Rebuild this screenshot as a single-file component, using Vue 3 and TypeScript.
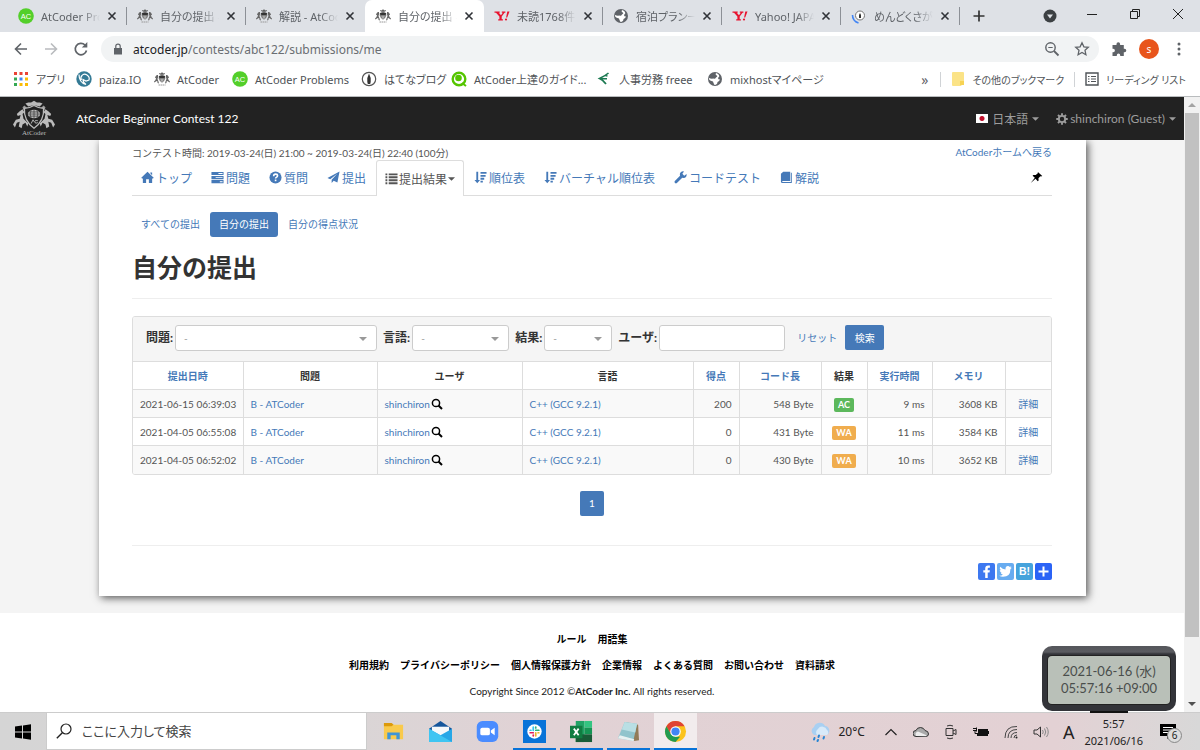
<script setup lang="ts">
interface Tab { icon: string; title: string; active?: boolean }
interface Mark { icon: string; title: string }
interface NavItem { icon: string; title: string; active?: boolean }
interface Row { time: string; score: number; size: string; result: string; exec: string; memory: string }

const tabs: Tab[] = [
  { icon: 'ac', title: 'AtCoder Problems' },
  { icon: 'crest', title: '自分の提出 - AtCoder' },
  { icon: 'crest', title: '解説 - AtCoder' },
  { icon: 'crest', title: '自分の提出 - AtCoder', active: true },
  { icon: 'yahoo', title: '未読1768件' },
  { icon: 'globe', title: '宿泊プラン一覧' },
  { icon: 'yahoo', title: 'Yahoo! JAPAN' },
  { icon: 'loading', title: 'めんどくさがり' },
]

const bookmarks: Mark[] = [
  { icon: 'apps', title: 'アプリ' },
  { icon: 'paiza', title: 'paiza.IO' },
  { icon: 'crest', title: 'AtCoder' },
  { icon: 'ac', title: 'AtCoder Problems' },
  { icon: 'pen', title: 'はてなブログ' },
  { icon: 'qiita', title: 'AtCoder上達のガイド...' },
  { icon: 'freee', title: '人事労務 freee' },
  { icon: 'globe', title: 'mixhostマイページ' },
]

const nav: NavItem[] = [
  { icon: 'home', title: 'トップ' },
  { icon: 'tasks', title: '問題' },
  { icon: 'question', title: '質問' },
  { icon: 'send', title: '提出' },
  { icon: 'list', title: '提出結果', active: true },
  { icon: 'sort', title: '順位表' },
  { icon: 'sort', title: 'バーチャル順位表' },
  { icon: 'wrench', title: 'コードテスト' },
  { icon: 'book', title: '解説' },
]

const columns = [
  { title: '提出日時', link: true },
  { title: '問題', link: false },
  { title: 'ユーザ', link: false },
  { title: '言語', link: false },
  { title: '得点', link: true },
  { title: 'コード長', link: true },
  { title: '結果', link: false },
  { title: '実行時間', link: true },
  { title: 'メモリ', link: true },
  { title: '', link: false },
]

const rows: Row[] = [
  { time: '2021-06-15 06:39:03', score: 200, size: '548 Byte', result: 'AC', exec: '9 ms', memory: '3608 KB' },
  { time: '2021-04-05 06:55:08', score: 0, size: '431 Byte', result: 'WA', exec: '11 ms', memory: '3584 KB' },
  { time: '2021-04-05 06:52:02', score: 0, size: '430 Byte', result: 'WA', exec: '10 ms', memory: '3652 KB' },
]

const footerTop = ['ルール', '用語集']
const footerLinks = ['利用規約', 'プライバシーポリシー', '個人情報保護方針', '企業情報', 'よくある質問', 'お問い合わせ', '資料請求']
const shares = ['facebook', 'twitter', 'hatena', 'plus']

const apps = [
  { icon: 'folder', label: 'エクスプローラー', state: '' },
  { icon: 'mail', label: 'メール', state: '' },
  { icon: 'zoom', label: 'Zoom', state: '' },
  { icon: 'slack', label: 'Slack', state: 'running' },
  { icon: 'excel', label: 'Excel', state: 'running' },
  { icon: 'notepad', label: 'メモ帳', state: 'running' },
  { icon: 'chrome', label: 'Chrome', state: 'running focused' },
]
const tray = ['chevron', 'cloud', 'meet', 'battery', 'wifi', 'volume']
</script>

<template>
  <div class="desktop">
    <svg class="sprite" aria-hidden="true">
      <symbol id="i-ac" viewBox="0 0 16 16"><circle cx="8" cy="8" r="7.8" fill="#53cf2a" /><text x="8" y="10.8" font-size="7.5" font-family="Liberation Sans, sans-serif" text-anchor="middle" fill="#fff">AC</text></symbol>
      <symbol id="i-crest" viewBox="0 0 32 28">
        <path d="M11 4.500l-1-2.500 4 1 2-3 2 3 4-1-1 2.500q-5 2-10 0z" fill="#555" />
        <path d="M9.500 8q6.500-3 13 0v5q-1 5-6.500 8.500-5.500-3.500-6.500-8.500z" fill="#777" />
        <path d="M10 8.500q6-3 12 0v2.500q-6 3-12 0z" fill="#333" />
        <path d="M12.500 14.500h7M13.500 17.500h5M16 13v7" stroke="#fff" stroke-width="1" opacity=".7" />
        <path d="M8 6q-4-1-5 3l-1 3 2 0-1 4-3 3 1 2 4-3 2 1 0 3 3 1-1-4-2-5 1-3zM24 6q4-1 5 3l1 3-2 0 1 4 3 3-1 2-4-3-2 1 0 3-3 1 1-4 2-5-1-3z" fill="#666" />
        <path d="M9 26h14" stroke="#999" stroke-width="2" stroke-dasharray="3 1" />
      </symbol>
      <symbol id="i-logo" viewBox="0 0 44 30">
        <g fill="currentColor">
          <path d="M16 6l-3-3 3-1 3 0 3-2 3 2 3 0 3 1-3 3q-6-2-12 0z" />
          <path d="M12 5l3 3-4 2-1-3zM32 5l-3 3 4 2 1-3z" opacity=".8" />
          <path d="M10 9L7 11 4 14 5 16 8 15 7 19 3 20 0 25 2 28 4 23 7 22 6 27 9 29 10 25 13 23 15 27 16 24 11 19 10 14 12 12zM34 9l3 2 3 3-1 2-3-1 1 4 4 1 3 5-2 3-2-5-3-1 1 5-3 2-1-4-3-2-2 4-1-3 5-5 1-5-2-2z" />
        </g>
        <path d="M12 8q5 0 10-3 5 3 10 3 1 13-10 21-11-8-10-21z" fill="#222" stroke="currentColor" stroke-width="1.300" />
        <ellipse cx="22" cy="14" rx="6.500" ry="4.500" fill="currentColor" />
        <path d="M15.500 14h13M16.500 11.800h11M16.500 16.200h11M22 9.500v9M19 10q-2 4 0 8M25 10q2 4 0 8" stroke="#222" stroke-width=".6" fill="none" />
        <path d="M19 24l2-4 1 2M26 21q-4-1-3 2 1 1 3 0" stroke="currentColor" fill="none" />
      </symbol>
      <symbol id="i-yahoo" viewBox="0 0 16 16"><path d="M.5 3.500h5.200v1.300h-.9l2.200 2.500 1.800-2.500h-1V3.500h3.600v1.300h-.9L7.700 8.600v2.600h1.200v1.300H4.200v-1.300h1.200V8.600L2 4.800H.5zM13.300 3.500h2.200l-2.300 6h-1.100z" fill="#e8132f" /><circle cx="12" cy="11.500" r="1.100" fill="#e8132f" /></symbol>
      <symbol id="i-globe" viewBox="0 0 16 16"><circle cx="8" cy="8" r="7" fill="#5f6368" /><path d="M9 2q-1 2 1 2.500 1 1-1 2-1 2-2.500 1Q4 8 2 7q-.5 2 2.500 3 2 0 2 2l1 2q3-.5 3-3 2-1 2.500-2.500-2 0-2-1.500 2-1.500 1-3-1-1.500-3-2z" fill="#fff" /></symbol>
      <symbol id="i-loading" viewBox="0 0 16 16"><circle cx="9" cy="7.500" r="4.500" fill="#fff" stroke="#777" /><path d="M8 10V7l1-2 1 2v3z" fill="#333" /><path d="M1.500 7q0 6 6 8" fill="none" stroke="#4285f4" stroke-width="1.600" /></symbol>
      <symbol id="i-apps" viewBox="0 0 16 16"><path d="M1 1h3v3H1zM6.500 1h3v3h-3zM12 1h3v3h-3z" fill="#ea4335" /><path d="M1 6.500h3v3H1z" fill="#34a853" /><path d="M6.500 6.500h3v3h-3z" fill="#4285f4" /><path d="M12 6.500h3v3h-3zM6.500 12h3v3h-3zM12 12h3v3h-3z" fill="#fbbc05" /><path d="M1 12h3v3H1z" fill="#34a853" /></symbol>
      <symbol id="i-paiza" viewBox="0 0 16 16"><circle cx="8" cy="8" r="7.700" fill="#347a95" /><path d="M3 3.500q0 8 7 10-3-2-3-5l3 1.500 3-1q1-3-2-5-3-2-5 .5-2 2-.5 4.500" fill="none" stroke="#fff" stroke-width="1.200" /></symbol>
      <symbol id="i-pen" viewBox="0 0 16 16"><circle cx="8" cy="8" r="6.700" fill="#fff" stroke="#555" stroke-width="1.200" /><path d="M8 2.500L6.300 7v4l.5 2h2.400l.5-2V7z" fill="#333" /></symbol>
      <symbol id="i-qiita" viewBox="0 0 16 16"><circle cx="8" cy="8" r="6.300" fill="#fff" stroke="#55c500" stroke-width="2.400" /><circle cx="7.500" cy="7" r="3.300" fill="#55c500" /><path d="M11 12l4 3" stroke="#55c500" stroke-width="2" /></symbol>
      <symbol id="i-freee" viewBox="0 0 16 16"><path d="M12.500 2Q9 5 3.500 7.500q4.500 2 6.500 5.500M4 7.800h7M9.500 4.500l2 .5" fill="none" stroke="#1d7a52" stroke-width="1.600" /></symbol>

      <symbol id="i-back" viewBox="0 0 16 16"><path d="M14 8H3M8 2.500L2.500 8 8 13.500" fill="none" stroke="currentColor" stroke-width="1.600" /></symbol>
      <symbol id="i-forward" viewBox="0 0 16 16"><path d="M2 8h11M8 2.500L13.500 8 8 13.500" fill="none" stroke="currentColor" stroke-width="1.600" /></symbol>
      <symbol id="i-reload" viewBox="0 0 16 16"><path d="M13.500 9.500A5.700 5.700 0 1 1 12 4" fill="none" stroke="currentColor" stroke-width="1.700" /><path d="M14.300 1v5.500H8.800z" fill="currentColor" /></symbol>
      <symbol id="i-lock" viewBox="0 0 12 12"><path d="M2 5h8v6.500H2z" fill="currentColor" /><path d="M3.800 5.500V3.200q0-2 2.200-2t2.200 2v2.300" fill="none" stroke="currentColor" stroke-width="1.200" /></symbol>
      <symbol id="i-magnify" viewBox="0 0 16 16"><circle cx="6.500" cy="6.500" r="4.700" fill="none" stroke="currentColor" stroke-width="1.400" /><path d="M10 10l4.500 4.500" stroke="currentColor" stroke-width="1.800" /><path d="M4.300 6.500h4.400" stroke="currentColor" /></symbol>
      <symbol id="i-star" viewBox="0 0 16 16"><path d="M8 1.800l1.900 4 4.400.5-3.300 3 .9 4.400L8 11.500l-3.900 2.200.9-4.400-3.300-3 4.400-.5z" fill="none" stroke="currentColor" stroke-width="1.300" /></symbol>
      <symbol id="i-puzzle" viewBox="0 0 16 16"><path d="M1.500 4h4V3a1.800 1.800 0 0 1 3.600 0v1h3.700v3.700h.7a1.800 1.800 0 0 1 0 3.600h-.7V15H9.200v-.8a1.700 1.700 0 0 0-3.400 0v.8H1.500v-3.800h.7a1.700 1.700 0 0 0 0-3.400h-.7z" fill="currentColor" /></symbol>
      <symbol id="i-dots" viewBox="0 0 16 16"><circle cx="8" cy="3" r="1.500" fill="currentColor" /><circle cx="8" cy="8" r="1.500" fill="currentColor" /><circle cx="8" cy="13" r="1.500" fill="currentColor" /></symbol>
      <symbol id="i-x" viewBox="0 0 10 10"><path d="M1.500 1.500l7 7M8.500 1.500l-7 7" stroke="currentColor" stroke-width="1.600" /></symbol>
      <symbol id="i-add" viewBox="0 0 12 12"><path d="M6 .5v11M.5 6h11" stroke="currentColor" stroke-width="1.700" /></symbol>
      <symbol id="i-down" viewBox="0 0 14 14"><circle cx="7" cy="7" r="6.500" fill="currentColor" /><path d="M4 5.500h6L7 9.500z" fill="#dee1e6" /></symbol>
      <symbol id="i-min" viewBox="0 0 12 12"><path d="M1 6.500h10" stroke="currentColor" /></symbol>
      <symbol id="i-restore" viewBox="0 0 12 12"><path d="M1.500 3.500h7v7h-7zM3.500 3.500v-2h7v7h-2" fill="none" stroke="currentColor" /></symbol>
      <symbol id="i-close" viewBox="0 0 12 12"><path d="M1 1l10 10M11 1L1 11" stroke="currentColor" /></symbol>
      <symbol id="i-note" viewBox="0 0 14 14"><path d="M2 0h10q1 0 1 1v9l-3 4H2q-1 0-1-1V1q0-1 1-1z" fill="#fbe387" /><path d="M9 9h4v4H9z" fill="#f7d354" /></symbol>
      <symbol id="i-reading" viewBox="0 0 14 14"><path d="M1 1h12v12H1z" fill="none" stroke="currentColor" stroke-width="1.400" /><path d="M3 4.500h1.500M6 4.500h5M3 7h1.500M6 7h5M3 9.500h1.500M6 9.500h5" stroke="currentColor" stroke-width="1.200" /></symbol>

      <symbol id="i-home" viewBox="0 0 14 14"><path d="M7 .8l6.700 6.400-.8.800H12v5H8.500V9h-3v4H2V8H1.100l-.8-.8zM10 1.500h2v3l-2-2z" fill="currentColor" /></symbol>
      <symbol id="i-tasks" viewBox="0 0 14 14"><path d="M.5 1h13v3.400H.5zM.5 5.400h13v3.400H.5zM.5 9.800h13v3.400H.5z" fill="currentColor" /><path d="M8 2.200h4.500v1H8zM5 6.600h7.500v1H5zM9.500 11h3v1h-3z" fill="#fff" /></symbol>
      <symbol id="i-question" viewBox="0 0 14 14"><circle cx="7" cy="7" r="6.500" fill="currentColor" /><path d="M5 5.600q0-2.200 2.200-2.200 2 0 2 1.800 0 1-1.300 1.700-.8.400-.8 1.300" fill="none" stroke="#fff" stroke-width="1.700" /><path d="M6.200 9.200H8V11H6.200z" fill="#fff" /></symbol>
      <symbol id="i-send" viewBox="0 0 14 14"><path d="M13.500.5l-2.300 12-4-2L5 13V9.500l6-6.500-7.500 6L.5 7.500z" fill="currentColor" /></symbol>
      <symbol id="i-list" viewBox="0 0 14 14"><path d="M.5 1.500h2v2h-2zM4 1.500h9.500v2H4zM.5 4.700h2v2h-2zM4 4.700h9.500v2H4zM.5 7.900h2v2h-2zM4 7.900h9.500v2H4zM.5 11.100h2v2h-2zM4 11.100h9.500v2H4z" fill="currentColor" /></symbol>
      <symbol id="i-sort" viewBox="0 0 14 14"><path d="M2.500.8h2v9H6.500l-3 3.500-3-3.500h2zM7 1h6.500v2H7zM7 4.200h5.500v2H7zM7 7.400h4v2H7zM7 10.600h2.500v1.800H7z" fill="currentColor" /></symbol>
      <symbol id="i-wrench" viewBox="0 0 14 14"><path d="M13.500 3.200L11 5 9 3 10.800.6Q8-.2 6.800 2 6 3.500 6.500 5L.9 10.900q-.8 1.200.2 2.100 1 .8 2 0L8.900 7.400q3 .6 4.300-1.600.6-1.200.3-2.600z" fill="currentColor" /></symbol>
      <symbol id="i-book" viewBox="0 0 14 14"><path d="M3.500.8H11v10H2.500v1H11.700V2h1v11H2.500Q1 13 1 11.500V3z" fill="currentColor" /></symbol>
      <symbol id="i-pin" viewBox="0 0 14 14"><path d="M8.500 1l4.700 4.500-1.300.5-.8-.3-2 2.200.2 2.300-1 .8L6 8.300.8 13l4.400-5.700L2.800 5l.8-.8 2.600.2L8.400 2.500z" fill="currentColor" /></symbol>
      <symbol id="i-cog" viewBox="0 0 14 14"><circle cx="7" cy="7" r="3.700" fill="none" stroke="currentColor" stroke-width="2.200" /><path d="M7 .3v2.500M7 11.200v2.500M.3 7h2.500M11.200 7h2.500M2.300 2.300l1.700 1.700M10 10l1.700 1.700M2.300 11.700L4 10M10 4l1.700-1.700" stroke="currentColor" stroke-width="2.200" /></symbol>
      <symbol id="i-search" viewBox="0 0 12 12"><circle cx="5" cy="5" r="3.600" fill="none" stroke="currentColor" stroke-width="1.500" /><path d="M7.500 7.500l3.500 3.500" stroke="currentColor" stroke-width="2" /></symbol>
      <symbol id="i-caret" viewBox="0 0 8 4"><path d="M0 0h8L4 4z" fill="currentColor" /></symbol>

      <symbol id="i-facebook" viewBox="0 0 17 17"><rect width="17" height="17" rx="2" fill="#3d78f0" /><path d="M7.200 15V9.500H5.300V7.200h1.900V5.500q0-3 3-3h1.700v2.300h-1.200q-1 0-1 1v1.400h2.200l-.4 2.300H9.700V15z" fill="#fff" /></symbol>
      <symbol id="i-twitter" viewBox="0 0 17 17"><rect width="17" height="17" rx="2" fill="#68acf0" /><path d="M14.800 4.700l-1.400 1.500q0 7.600-7.400 7.600-2.200 0-3.800-1.100 2.200.1 3.700-1.200-1.700-.2-2.300-1.800h1.100Q2.800 9 2.700 7l1.200.3Q2 5.700 3.200 3.800q2.200 2.600 5.300 2.700-.3-3.200 2.500-3.400 1.100 0 1.800.8l1.600-.6-.9 1.400z" fill="#fff" /></symbol>
      <symbol id="i-hatena" viewBox="0 0 17 17"><rect width="17" height="17" rx="2" fill="#45a3dc" /><text x="8.500" y="12.300" text-anchor="middle" font-size="10.500" font-weight="700" font-family="Liberation Sans, sans-serif" fill="#fff">B!</text></symbol>
      <symbol id="i-plus" viewBox="0 0 17 17"><rect width="17" height="17" rx="2" fill="#2b63f6" /><path d="M8.500 3.500v10M3.500 8.500h10" stroke="#fff" stroke-width="2" /></symbol>

      <symbol id="i-windows" viewBox="0 0 16 16"><path d="M0 2.500l7-1v6H0zM8 1.400L16 .3v7.200H8zM0 8.500h7v6l-7-1zM8 8.500h8v7.200l-8-1.100z" fill="#000" /></symbol>
      <symbol id="i-find" viewBox="0 0 16 16"><circle cx="10" cy="6" r="5" fill="none" stroke="#222" stroke-width="1.200" /><path d="M6.300 9.700L.8 15.200" stroke="#222" stroke-width="1.400" /></symbol>
      <symbol id="i-folder" viewBox="0 0 24 24"><path d="M2 3h8l2 2h10v15H2z" fill="#f9ca4c" /><path d="M2 3h8l2 2-2 1.500H2z" fill="#dc9a0c" /><path d="M5.500 13h13v7H15v-4H9v4H5.500z" fill="#3e95d8" /></symbol>
      <symbol id="i-mail" viewBox="0 0 24 24"><path d="M0 9L12 1l12 8v3H0z" fill="#15559b" /><path d="M3 7h18v9H3z" fill="#f5f8fa" /><path d="M0 9l12 7 12-7v14H0z" fill="#27a7e7" /><path d="M0 9l24 14H0z" fill="#3fc5f2" /></symbol>
      <symbol id="i-zoom" viewBox="0 0 24 24"><rect x=".8" y="1" width="22.400" height="22" rx="6" fill="#4a8cff" /><rect x="4.500" y="8" width="10" height="8" rx="2" fill="#fff" /><path d="M15.500 11l4-3v8l-4-3z" fill="#fff" /></symbol>
      <symbol id="i-slack" viewBox="0 0 24 24"><path d="M0 0h24v24H0z" fill="#0873d8" /><circle cx="12" cy="12" r="7.500" fill="#fff" /><path d="M10.700 7.500v3.300M7.500 10.700h.8" stroke="#36c5f0" stroke-width="1.800" stroke-linecap="round" /><path d="M13.300 7.500v.8M13.300 10.700h3.200" stroke="#2eb67d" stroke-width="1.800" stroke-linecap="round" /><path d="M13.300 13.300v3.200M15.700 13.300h.8" stroke="#ecb22e" stroke-width="1.800" stroke-linecap="round" /><path d="M10.700 15.700v.8M7.500 13.300h3.200" stroke="#e01e5a" stroke-width="1.800" stroke-linecap="round" /></symbol>
      <symbol id="i-excel" viewBox="0 0 24 24"><path d="M6 1h9v22H6z" fill="#21a366" /><path d="M15 1h8v7h-8z" fill="#33c481" /><path d="M15 8h8v7h-8z" fill="#159554" /><path d="M6 15h17v8H6z" fill="#185c37" /><path d="M0 6h13v13H0z" fill="#107c41" /><path d="M4 9l5 7M9 9l-5 7" stroke="#fff" stroke-width="1.800" /></symbol>
      <symbol id="i-notepad" viewBox="0 0 24 24"><path d="M8 2l14 3 1 16-5 1z" fill="#927b57" /><path d="M8 2l13 2-4 18L1 19z" fill="#91c4cc" /><path d="M8 2l13 2-2 9L5 10z" fill="#b9dfe4" /><path d="M1 19l2-3 15 4-1 2z" fill="#e8f1f1" /></symbol>
      <symbol id="i-chrome" viewBox="0 0 24 24"><circle cx="12" cy="12" r="11" fill="#fbc31c" /><path d="M12 1a11 11 0 0 1 9.500 5.500H12L7.200 14.800 2.500 6.500A11 11 0 0 1 12 1z" fill="#e04434" /><path d="M2.500 6.500l4.700 8.200 4.800 2.800h4.800L12 23A11 11 0 0 1 2.500 6.500z" fill="#229b51" /><circle cx="12" cy="12" r="5.500" fill="#fff" /><circle cx="12" cy="12" r="4.300" fill="#4285f4" /></symbol>
      <symbol id="i-weather" viewBox="0 0 22 22"><path d="M5 14a4.500 4.500 0 0 1 0-8 6 6 0 0 1 11-1 4.600 4.600 0 0 1 1 9z" fill="#a9d0f2" /><path d="M8 14a4 4 0 0 1 1-6 5 5 0 0 1 9 1 3 3 0 0 1 0 5z" fill="#d8eaf9" /><path d="M5.500 17l-.5 1.500M10 14.500l-.5 1.500M15 16l-.5 1.500M9 19l-.5 1" stroke="#2785d4" stroke-width="2" stroke-linecap="round" /></symbol>
      <symbol id="i-chevron" viewBox="0 0 16 16"><path d="M2.500 11L8 5.500l5.500 5.500" fill="none" stroke="#222" stroke-width="1.200" /></symbol>
      <symbol id="i-cloud" viewBox="0 0 16 16"><path d="M3 12.500a3 3 0 0 1 0-6q1-3 4.500-3 3 0 4.500 3 3.500.5 3.500 3.500 0 2.500-3 2.500z" fill="#aaa" stroke="#333" /><path d="M3 12a3 3 0 0 1 2-4.500l9 4-2 .8z" fill="#eee" /></symbol>
      <symbol id="i-meet" viewBox="0 0 16 16"><path d="M3 4.500h7v7H3zM10 7l3-1.500v5L10 9M4 2q3-1.500 6 0M4 14q3 1.500 6 0" fill="none" stroke="#333" /></symbol>
      <symbol id="i-battery" viewBox="0 0 16 16"><path d="M5 5h10v7H4V9h1zM15 7h1v3h-1z" fill="#111" /><path d="M0 4.500h4M0 6.500h4M3.500 3.500v4M2 7v2.500h3" fill="none" stroke="#111" /></symbol>
      <symbol id="i-wifi" viewBox="0 0 16 16"><g fill="none" stroke="#444"><path d="M2 14Q2 2 14 2.500M5 14Q5 5.500 14 5.500M8 14Q8 8.500 14 8.500M11 14q0-3 3-3" /></g><circle cx="13.500" cy="13.500" r="1" fill="#222" /></symbol>
      <symbol id="i-volume" viewBox="0 0 16 16"><path d="M1 6h3l3.500-3v10L4 10H1z" fill="none" stroke="#333" /><path d="M9.500 6q1.500 2 0 4M11.500 4.500q2.500 3.500 0 7M13.500 3q3.500 5 0 10" fill="none" stroke="#888" /></symbol>
      <symbol id="i-notice" viewBox="0 0 16 16"><path d="M0 0h16v12H10l-3 3v-3H0z" fill="#000" /><path d="M3 3.500h10M3 6h10M3 8.500h6" stroke="#fff" /></symbol>
    </svg>

    <header class="chrome">
      <div class="tabstrip">
        <div v-for="(tab, i) in tabs" :key="i" class="tab" :class="{ active: tab.active, 'before-active': tabs[i + 1]?.active }">
          <svg class="fav"><use :href="`#i-${tab.icon}`" /></svg>
          <span class="tab-title">{{ tab.title }}</span>
          <button class="plain tab-close" aria-label="タブを閉じる"><svg class="s10"><use href="#i-x" /></svg></button>
        </div>
        <button class="plain new-tab" aria-label="新しいタブ"><svg class="s12"><use href="#i-add" /></svg></button>
        <div class="window-buttons">
          <button class="plain dark" aria-label="タブを検索"><svg class="s14"><use href="#i-down" /></svg></button>
          <button class="plain" aria-label="最小化"><svg class="s12"><use href="#i-min" /></svg></button>
          <button class="plain" aria-label="元に戻す"><svg class="s12"><use href="#i-restore" /></svg></button>
          <button class="plain" aria-label="閉じる"><svg class="s12"><use href="#i-close" /></svg></button>
        </div>
      </div>

      <div class="toolbar">
        <div class="history">
          <button class="plain" aria-label="戻る"><svg class="s16"><use href="#i-back" /></svg></button>
          <button class="plain faded" aria-label="進む"><svg class="s16"><use href="#i-forward" /></svg></button>
          <button class="plain" aria-label="再読み込み"><svg class="s16"><use href="#i-reload" /></svg></button>
        </div>
        <div class="omnibox">
          <svg class="s12"><use href="#i-lock" /></svg>
          <span class="url"><b>atcoder.jp</b>/contests/abc122/submissions/me</span>
          <button class="plain" aria-label="ズーム"><svg class="s16"><use href="#i-magnify" /></svg></button>
          <button class="plain" aria-label="ブックマークに追加"><svg class="s16"><use href="#i-star" /></svg></button>
        </div>
        <button class="plain" aria-label="拡張機能"><svg class="s16"><use href="#i-puzzle" /></svg></button>
        <button class="avatar">s</button>
        <button class="plain" aria-label="メニュー"><svg class="s16"><use href="#i-dots" /></svg></button>
      </div>

      <nav class="bookmarks">
        <div class="marks">
          <a v-for="mark in bookmarks" :key="mark.title" href="#"><svg class="s16"><use :href="`#i-${mark.icon}`" /></svg>{{ mark.title }}</a>
        </div>
        <div class="marks-right">
          <button class="plain more" aria-label="その他">»</button>
          <a href="#"><svg class="s14"><use href="#i-note" /></svg>その他のブックマーク</a>
          <a href="#"><svg class="s14"><use href="#i-reading" /></svg>リーディング リスト</a>
        </div>
      </nav>
    </header>

    <div class="viewport">
      <div class="page">
        <header class="navbar">
          <a class="logo" href="#"><svg><use href="#i-logo" /></svg><span>AtCoder</span></a>
          <a class="contest" href="#">AtCoder Beginner Contest 122</a>
          <button class="plain menu"><span class="flag"></span>日本語<svg class="caret"><use href="#i-caret" /></svg></button>
          <button class="plain menu"><svg class="s12"><use href="#i-cog" /></svg>shinchiron (Guest)<svg class="caret"><use href="#i-caret" /></svg></button>
        </header>

        <div class="backdrop">
          <main class="sheet">
            <div class="meta">
              <span>コンテスト時間: 2019-03-24(日) 21:00 ~ 2019-03-24(日) 22:40 (100分)</span>
              <a href="#">AtCoderホームへ戻る</a>
            </div>
            <nav class="nav-tabs">
              <a v-for="item in nav" :key="item.title" href="#" :class="{ current: item.active }"><svg class="s13"><use :href="`#i-${item.icon}`" /></svg>{{ item.title }}<svg v-if="item.active" class="caret"><use href="#i-caret" /></svg></a>
              <button class="plain pin" aria-label="固定"><svg class="s13"><use href="#i-pin" /></svg></button>
            </nav>
            <nav class="pills">
              <a href="#">すべての提出</a>
              <a href="#" class="selected">自分の提出</a>
              <a href="#">自分の得点状況</a>
            </nav>
            <h1>自分の提出</h1>

            <section class="panel">
              <form class="filters" @submit.prevent>
                <label for="task">問題:</label>
                <span class="pick wide"><select id="task"><option>-</option></select><svg><use href="#i-caret" /></svg></span>
                <label for="language">言語:</label>
                <span class="pick mid"><select id="language"><option>-</option></select><svg><use href="#i-caret" /></svg></span>
                <label for="status">結果:</label>
                <span class="pick small"><select id="status"><option>-</option></select><svg><use href="#i-caret" /></svg></span>
                <label for="user">ユーザ:</label>
                <input id="user" type="text" />
                <a class="reset" href="#">リセット</a>
                <button class="submit" type="submit">検索</button>
              </form>
              <table>
                <colgroup><col v-for="n in 10" :key="n" :class="`c${n}`" /></colgroup>
                <thead>
                  <tr><th v-for="(col, i) in columns" :key="i" scope="col"><a v-if="col.link" href="#">{{ col.title }}</a><template v-else>{{ col.title }}</template></th></tr>
                </thead>
                <tbody>
                  <tr v-for="row in rows" :key="row.time">
                    <td>{{ row.time }}</td>
                    <td><a href="#">B - ATCoder</a></td>
                    <td><a href="#">shinchiron</a><svg class="lens"><use href="#i-search" /></svg></td>
                    <td><a href="#">C++ (GCC 9.2.1)</a></td>
                    <td class="num">{{ row.score }}</td>
                    <td class="num">{{ row.size }}</td>
                    <td class="mid-cell"><span class="badge" :class="row.result.toLowerCase()">{{ row.result }}</span></td>
                    <td class="num">{{ row.exec }}</td>
                    <td class="num">{{ row.memory }}</td>
                    <td class="mid-cell"><a href="#">詳細</a></td>
                  </tr>
                </tbody>
              </table>
            </section>

            <div class="pager"><a href="#">1</a></div>
            <div class="shares">
              <a v-for="share in shares" :key="share" href="#" :aria-label="share"><svg><use :href="`#i-${share}`" /></svg></a>
            </div>
          </main>
        </div>

        <footer class="footer">
          <div class="links"><a v-for="text in footerTop" :key="text" href="#">{{ text }}</a></div>
          <div class="links"><a v-for="text in footerLinks" :key="text" href="#">{{ text }}</a></div>
          <p>Copyright Since 2012 ©<b>AtCoder Inc.</b> All rights reserved.</p>
        </footer>
        <div class="clock"><div class="screen"><span>2021-06-16 (水)</span><span>05:57:16 +09:00</span></div></div>
      </div>
      <div class="scrollbar"><svg class="up"><use href="#i-caret" /></svg><div class="thumb"></div><svg><use href="#i-caret" /></svg></div>
    </div>

    <footer class="taskbar">
      <button class="plain start" aria-label="スタート"><svg class="s16"><use href="#i-windows" /></svg></button>
      <label class="search"><svg class="s16"><use href="#i-find" /></svg><input type="text" placeholder="ここに入力して検索" aria-label="検索" /></label>
      <div class="apps">
        <button v-for="app in apps" :key="app.icon" class="plain app" :class="app.state" :aria-label="app.label"><svg><use :href="`#i-${app.icon}`" /></svg></button>
      </div>
      <div class="tray">
        <svg class="weather"><use href="#i-weather" /></svg>
        <span class="temp">20°C</span>
        <svg v-for="icon in tray" :key="icon" class="s16 tray-icon"><use :href="`#i-${icon}`" /></svg>
        <span class="ime">A</span>
        <div class="datetime"><span>5:57</span><span>2021/06/16</span></div>
        <button class="plain notice" aria-label="通知"><svg class="s16"><use href="#i-notice" /></svg><span>6</span></button>
      </div>
    </footer>
  </div>
</template>

<style>
body { margin: 0; overflow: hidden; }
</style>

<style scoped>
* { box-sizing: border-box; }
.desktop { display: flex; flex-direction: column; height: 100vh; background: #fff; font-family: "Noto Sans", "Noto Sans CJK JP", sans-serif; font-feature-settings: "palt"; }
.sprite { position: absolute; width: 0; height: 0; }
svg { display: block; flex: none; }
.s10 { width: 10px; height: 10px; }
.s12 { width: 12px; height: 12px; }
.s13 { width: 13px; height: 13px; }
.s14 { width: 14px; height: 14px; }
.s16, .fav { width: 16px; height: 16px; }
.caret { width: 7px; height: 4px; }
a { color: #4579b8; text-decoration: none; white-space: nowrap; }
button, input, select { font: inherit; font-feature-settings: inherit; color: inherit; margin: 0; }
.plain { display: flex; align-items: center; justify-content: center; padding: 0; border: 0; background: none; }

.chrome { flex: none; color: #5f6368; font-size: 11px; border-bottom: 1px solid #b9bcbe; }
.tabstrip { display: flex; height: 32px; padding-left: 8px; background: #dee1e6; }
.tab { position: relative; display: flex; align-items: center; flex: 0 1 119px; min-width: 0; padding: 0 10px; }
.tab::after { content: ""; position: absolute; right: 0; top: 7px; width: 1px; height: 18px; background: #8c9096; }
.tab.active { background: #fff; border-radius: 7px 7px 0 0; }
.tab.active::after, .tab.before-active::after { display: none; }
.tab-title { flex: 1; min-width: 0; margin-left: 7px; overflow: hidden; white-space: nowrap; mask-image: linear-gradient(90deg, #000 70%, transparent); }
.tab-close { margin-left: 7px; color: #303338; }
.new-tab { width: 38px; color: #333; }
.window-buttons { display: flex; align-items: center; gap: 31px; margin-left: auto; padding: 0 16px 4px 0; color: #222; }
.dark { margin: 4px -2px 0 0; color: #3c4043; }
.toolbar { display: flex; align-items: center; gap: 12px; height: 34px; padding: 0 13px; }
.history { display: flex; gap: 14px; }
.toolbar .faded { color: #b9bbbe; }
.omnibox { display: flex; align-items: center; flex: 1; gap: 14px; height: 26px; padding: 0 9px 0 11px; border-radius: 13px; background: #f1f3f4; }
.url { flex: 1; font-size: 12px; margin-left: -5px; color: #6a6e72; white-space: nowrap; }
.url b { font-weight: 400; color: #202124; }
.avatar { width: 20px; height: 20px; padding: 0; border: 0; border-radius: 50%; background: #e8551c; color: #fff; font-size: 10px; line-height: 18px; }
.bookmarks { display: flex; align-items: center; justify-content: space-between; height: 30px; padding: 0 14px 4px 13px; }
.bookmarks a { display: flex; align-items: center; gap: 7px; color: #4f5357; }
.marks { display: grid; grid-template-columns: 63px 78px 78px 129px 90px 145px 111px auto; }
.marks-right { display: flex; align-items: center; font-size: 10px; }
.marks-right a { padding-left: 10px; margin-left: 10px; border-left: 1px solid #d0d3d6; }
.more { font-size: 14px; margin-right: 2px; }

.viewport { position: relative; display: flex; flex: 1; min-height: 0; font-feature-settings: normal; }
.page { position: relative; flex: 1; min-width: 0; background: #fff; font-family: Lato, "Noto Sans CJK JP", sans-serif; font-size: 10px; color: #555; }
.navbar { display: flex; align-items: center; height: 43px; padding: 0 8px 0 12px; background: #222; color: #9d9d9d; }
.logo { display: flex; flex-direction: column; align-items: center; width: 44px; color: #bbb; font-family: "Liberation Serif", serif; font-size: 7px; line-height: 7px; }
.logo svg { width: 42px; height: 30px; }
.contest { flex: 1; margin-left: 20px; color: #fff; font-size: 12px; }
.menu { gap: 4px; margin-left: 17px; font-size: 12px; }
.menu .s12 { margin-right: -2px; }
.flag { width: 12px; height: 9px; background: radial-gradient(circle, #c1102c 2px, #fff 3px); }
.backdrop { padding: 0 98px 17px 99px; background: #f4f4f4; overflow: hidden; }
.sheet { padding: 6px 34px 16px 33px; background: #fff; box-shadow: 2px 2px 8px #555; }
.meta { display: flex; justify-content: space-between; height: 14px; line-height: 14px; }
.meta a { line-height: 12px; }
.nav-tabs { display: flex; height: 36px; border-bottom: 1px solid #ddd; font-size: 12px; }
.nav-tabs a { display: flex; align-items: center; padding: 0 9px; margin-right: 1px; gap: 2px; }
.nav-tabs .current { height: 36px; padding: 0 8px; gap: 1px; border: 1px solid #ddd; border-bottom: 0; border-radius: 3px 3px 0 0; background: #fff; color: #555; }
.pin { margin-left: auto; margin-right: 9px; color: #000; }
.pills { display: flex; margin-top: 16px; gap: 1px; }
.pills a { padding: 0 9px; line-height: 25px; }
.pills a.selected { border-radius: 3px; background: #4579b8; color: #fff; }
h1 { margin: 12px 0 17px; padding-bottom: 12px; border-bottom: 1px solid #eee; color: #333; font-size: 25px; line-height: 37px; font-weight: 700; }
.panel { border: 1px solid #ddd; border-radius: 3px; overflow: hidden; }
.filters { display: flex; align-items: center; height: 44px; padding: 0 13px 3px; background: #f5f5f5; }
.filters label { margin-right: 2px; padding-bottom: 2px; color: #333; font-size: 12px; font-weight: 700; white-space: nowrap; }
.pick { position: relative; margin-right: 6px; }
.pick select { width: 100%; height: 26px; padding: 0 8px; border: 1px solid #ccc; border-radius: 3px; background: #fff; appearance: none; color: #999; }
.pick svg { position: absolute; right: 10px; top: 12px; width: 8px; height: 4px; color: #999; }
.wide { width: 202px; }
.mid { width: 97px; }
.small { width: 68px; }
.filters input { width: 126px; height: 26px; border: 1px solid #ccc; border-radius: 3px; background: #fff; }
.reset { margin: 0 8px 0 12px; }
.submit { width: 39px; height: 25px; padding: 0; border: 0; border-radius: 2px; background: #4579b8; color: #fff; }
table { width: 100%; table-layout: fixed; border-collapse: collapse; }
.c1 { width: 110px; } .c2 { width: 134px; } .c3 { width: 145px; } .c4 { width: 171px; } .c5 { width: 46px; }
.c6 { width: 82px; } .c7 { width: 46px; } .c8 { width: 65px; } .c9 { width: 73px; } .c10 { width: 46px; }
th, td { height: 28px; padding: 0 7px; border-top: 1px solid #ddd; border-left: 1px solid #ddd; line-height: 16px; white-space: nowrap; text-align: left; }
th { text-align: center; color: #333; }
th:first-child, td:first-child { border-left: 0; }
tbody tr:nth-child(odd) { background: #f9f9f9; }
.num { text-align: right; }
.mid-cell { text-align: center; }
.lens { display: inline-block; width: 12px; height: 12px; margin-left: 1px; color: #000; vertical-align: -2px; }
.badge { display: inline-block; padding: 0 4px; border-radius: 2px; color: #fff; font-size: 9px; font-weight: 700; line-height: 14px; vertical-align: -1px; }
.ac { background: #5cb85c; }
.wa { background: #f0ad4e; }
.pager { display: flex; justify-content: center; margin-top: 16px; padding-bottom: 29px; border-bottom: 1px solid #eee; }
.pager a { width: 24px; border-radius: 2px; background: #4579b8; color: #fff; line-height: 25px; text-align: center; }
.shares { display: flex; justify-content: flex-end; gap: 2px; margin-top: 17px; }
.shares svg { width: 17px; height: 17px; }
.footer { padding-top: 18px; text-align: center; color: #222; }
.links { display: flex; justify-content: center; gap: 11px; margin-bottom: 10px; line-height: 16px; font-weight: 700; }
.links a { color: #000; }
.footer p { margin: 0; line-height: 16px; }
.clock { position: absolute; right: 8px; bottom: 1px; width: 134px; height: 65px; padding: 10px 6px 7px; border-radius: 10px; background: linear-gradient(#55565b, #5a5b60 6px, #333439 8px); z-index: 1; }
.clock::after { content: ""; position: absolute; left: 48px; bottom: -2px; width: 38px; height: 2px; background: #111; }
.screen { display: flex; flex-direction: column; justify-content: center; height: 100%; border-radius: 4px; background: #b9c0b8; color: #4a4e4c; font-size: 13px; line-height: 17px; text-align: center; box-shadow: 0 0 0 1px #222; }
.scrollbar { display: flex; flex-direction: column; align-items: center; width: 16px; padding: 6px 1px; background: #f1f1f1; color: #505050; }
.scrollbar svg { width: 8px; height: 4px; }
.scrollbar .up { transform: rotate(180deg); color: #a3a3a3; }
.thumb { width: 14px; height: 524px; margin: 6px 0 auto; background: #c1c1c1; }

.taskbar { display: flex; flex: none; height: 38px; border-top: 1px solid #ccc; background: linear-gradient(90deg, #d5d5d5, #dad5d6 30%, #e1d2d5 45%, #e3d1d4 88%, #d8d8d8); color: #222; }
.start { width: 46px; }
.search { display: flex; align-items: center; width: 321px; gap: 10px; padding: 0 9px; border: 1px solid #ccc; border-top: 0; background: #fff; }
.search input { width: 100%; min-width: 0; padding: 0; border: 0; outline: 0; background: none; font-size: 13px; }
.search input::placeholder { color: #444; opacity: 1; }
.apps { display: flex; margin-left: 5px; }
.app { width: 43px; margin-right: 4px; }
.app svg { width: 23px; height: 23px; }
.running { box-shadow: inset 0 -2px #0873d8; }
.focused { background: #f2eced; }
.tray { display: flex; align-items: center; margin-left: auto; padding-right: 24px; }
.weather { width: 22px; height: 22px; }
.temp { margin: 0 18px 0 8px; font-size: 12px; }
.tray-icon { margin-right: 14px; }
.ime { margin-right: 10px; font-size: 18px; }
.datetime { display: flex; flex-direction: column; margin-right: 17px; font-size: 11px; line-height: 17px; text-align: center; }
.notice { position: relative; }
.notice span { position: absolute; left: 7px; top: 4px; width: 15px; height: 15px; border: 1px solid #888; border-radius: 50%; background: #ddd; font-size: 10px; line-height: 13px; }
</style>
